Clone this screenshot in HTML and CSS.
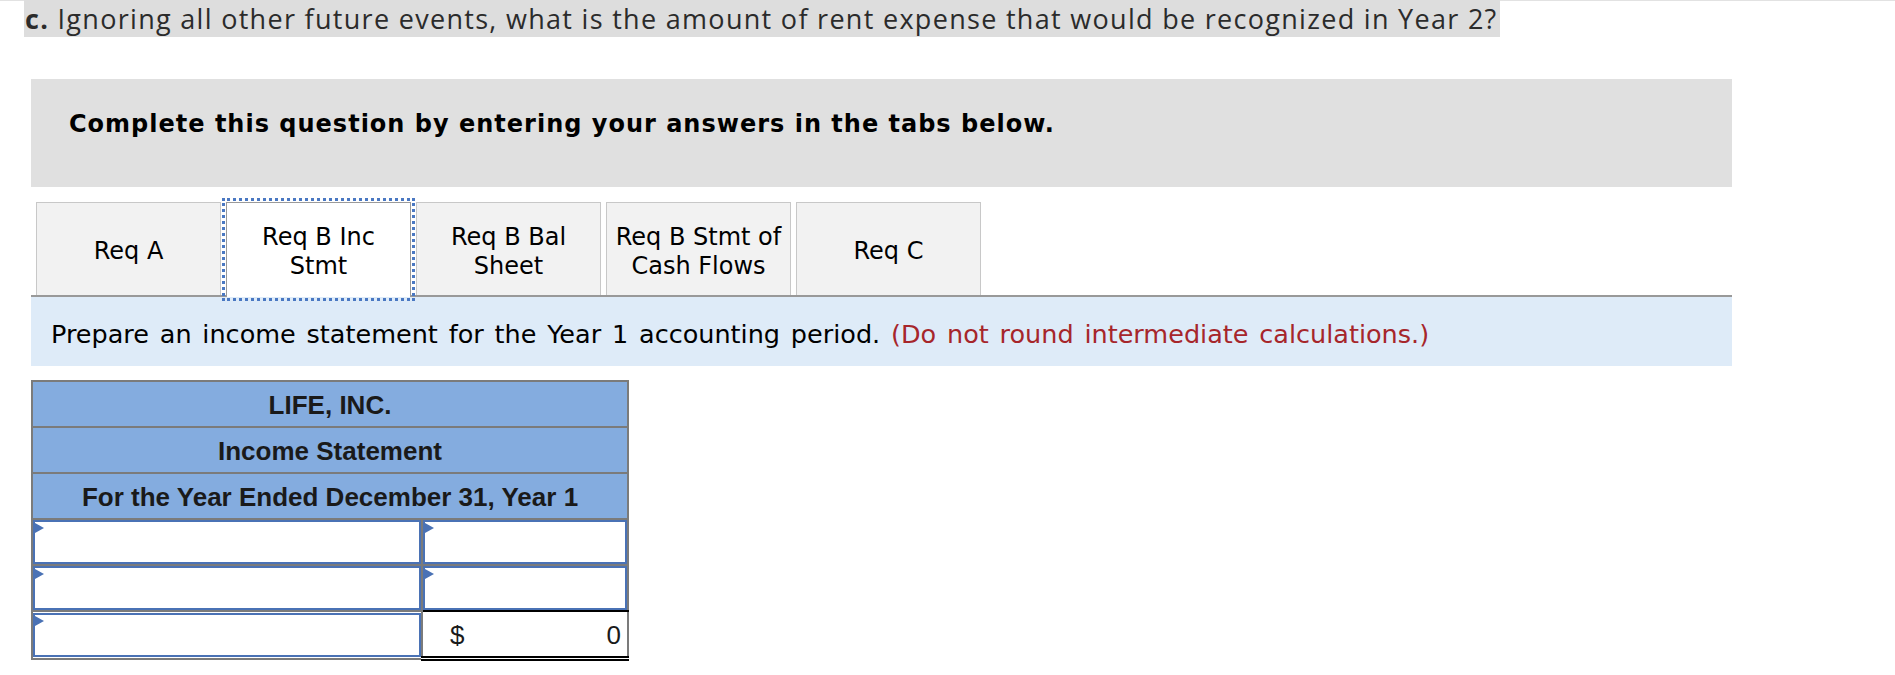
FILE: index.html
```html
<!DOCTYPE html>
<html>
<head>
    <title>Req B Inc Stmt</title>
    <meta charset="UTF-8">
    <link rel="stylesheet" href="styles.css">
</head>
<body>
    <div class="page">
        <p class="question"><span class="question-text"><b>c.</b> Ignoring all other future events, what is the amount of rent expense that would be recognized in Year 2?</span></p>

        <div class="notice">Complete this question by entering your answers in the tabs below.</div>

        <div class="tabs">
            <div class="tab">Req A</div>
            <div class="tab active">Req B Inc<br>Stmt</div>
            <div class="tab">Req B Bal<br>Sheet</div>
            <div class="tab">Req B Stmt of<br>Cash Flows</div>
            <div class="tab">Req C</div>
        </div>

        <div class="instruction">Prepare an income statement for the Year 1 accounting period.&nbsp;<span class="hint">(Do not round intermediate calculations.)</span></div>

        <table class="statement">
            <tr><th colspan="2">LIFE, INC.</th></tr>
            <tr><th colspan="2">Income Statement</th></tr>
            <tr><th colspan="2">For the Year Ended December 31, Year 1</th></tr>
            <tr>
                <td class="label"><div class="field"><span class="marker"></span><input type="text"></div></td>
                <td class="amount"><div class="field"><span class="marker"></span><input type="text"></div></td>
            </tr>
            <tr>
                <td class="label"><div class="field"><span class="marker"></span><input type="text"></div></td>
                <td class="amount above-total"><div class="field"><span class="marker"></span><input type="text"></div></td>
            </tr>
            <tr>
                <td class="label"><div class="field"><span class="marker"></span><input type="text"></div></td>
                <td class="total"><span>$</span><span class="sum">0</span></td>
            </tr>
        </table>
    </div>
</body>
</html>
```

FILE: styles.css
```css
body { margin: 0; font-family: "DejaVu Sans", Verdana, sans-serif; color: #000; }
.page { border-top: 1px solid #e2e2e2; }

.question { margin: -1px 0 0 24px; }
.question-text { display: inline-block; background: #dddddd; color: #2b2b2b; font-family: "Open Sans", sans-serif; font-size: 27px; letter-spacing: 1.3px; line-height: 37px; padding: 0 2px 0 1px; }

.notice { margin: 42px 0 0 31px; width: 1701px; height: 108px; box-sizing: border-box; padding: 31px 0 0 38px; background: #e0e0e0; font-weight: bold; font-size: 24px; letter-spacing: 1px; line-height: 28px; }

.tabs { display: flex; align-items: flex-start; gap: 5px; margin: 15px 0 0 31px; padding-left: 5px; }
.tab { width: 185px; height: 93px; box-sizing: border-box; padding-top: 5px; border: 1px solid #c8c8c8; border-bottom: none; background: #f2f2f2; display: flex; align-items: center; justify-content: center; text-align: center; font-size: 24px; line-height: 29px; }
.tab.active { background: #fff; border-color: #9a9a9a; height: 95px; padding-bottom: 2px; margin-bottom: -2px; z-index: 1; outline: 3px dotted #4a78c2; outline-offset: 1px; }

.instruction { margin-left: 31px; width: 1701px; height: 71px; box-sizing: border-box; border-top: 2px solid #999; background: #deebf8; padding: 4px 0 0 20px; display: flex; align-items: center; font-size: 25.5px; word-spacing: 2.7px; }
.hint { color: #a6262b; }

.statement { margin: 14px 0 0 31px; width: 598px; border-collapse: collapse; font-family: "Liberation Sans", Arial, sans-serif; font-size: 26px; }
.statement th, .statement td { border: 2px solid #7b7b7b; padding: 0; }
.statement th { background: #84acdf; padding-top: 3px; line-height: 41px; font-weight: bold; color: #1a1a1a; }
.statement .label { width: 388px; }
.field { position: relative; }
.field input { display: block; width: 100%; height: 44px; box-sizing: border-box; margin: 0; border: 2px solid #4a72b5; background: #fff; font: inherit; }
.marker { position: absolute; left: 2px; top: 3px; width: 0; height: 0; border-top: 5px solid transparent; border-bottom: 5px solid transparent; border-left: 9px solid #4a72b5; }
.statement .above-total { border-bottom-color: #000; }
.statement .total { border-top: 2px solid #000; border-bottom: 5px double #000; height: 41px; padding: 3px 6px 0 27px; color: #1a1a1a; }
.sum { float: right; }
```
